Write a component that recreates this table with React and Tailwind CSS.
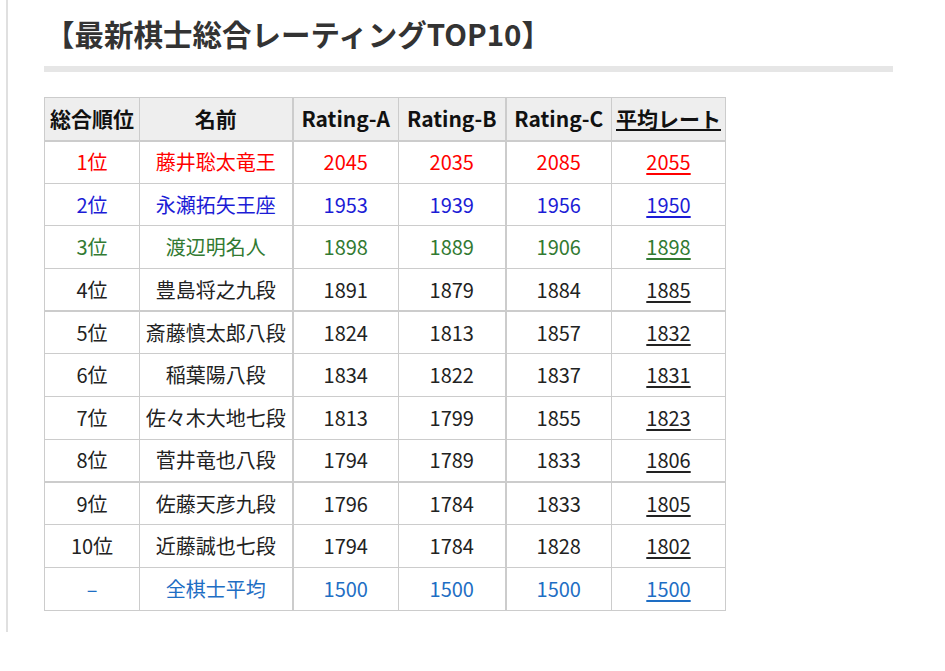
import React from 'react';

const rows = [
  { rank: '1位', name: '藤井聡太竜王', a: 2045, b: 2035, c: 2085, avg: 2055, color: 'text-[#ff0000]' },
  { rank: '2位', name: '永瀬拓矢王座', a: 1953, b: 1939, c: 1956, avg: 1950, color: 'text-[#1c1cd6]' },
  { rank: '3位', name: '渡辺明名人', a: 1898, b: 1889, c: 1906, avg: 1898, color: 'text-[#327a32]' },
  { rank: '4位', name: '豊島将之九段', a: 1891, b: 1879, c: 1884, avg: 1885, color: 'text-[#222]' },
  { rank: '5位', name: '斎藤慎太郎八段', a: 1824, b: 1813, c: 1857, avg: 1832, color: 'text-[#222]', thick: true },
  { rank: '6位', name: '稲葉陽八段', a: 1834, b: 1822, c: 1837, avg: 1831, color: 'text-[#222]' },
  { rank: '7位', name: '佐々木大地七段', a: 1813, b: 1799, c: 1855, avg: 1823, color: 'text-[#222]' },
  { rank: '8位', name: '菅井竜也八段', a: 1794, b: 1789, c: 1833, avg: 1806, color: 'text-[#222]' },
  { rank: '9位', name: '佐藤天彦九段', a: 1796, b: 1784, c: 1833, avg: 1805, color: 'text-[#222]', thick: true },
  { rank: '10位', name: '近藤誠也七段', a: 1794, b: 1784, c: 1828, avg: 1802, color: 'text-[#222]' },
  { rank: '–', name: '全棋士平均', a: 1500, b: 1500, c: 1500, avg: 1500, color: 'text-[#1e6ec4]' },
];

export default function App() {
  return (
    <div className="bg-white min-h-[671px] font-['Noto_Sans_CJK_JP',sans-serif]">
      <div className="ml-[6px] w-[888px] border-l-2 border-[#e0e0e0] pl-[36px] pb-[21px]">
        <h1 className="pl-[1px] pt-[10px] h-[46px] text-[29.5px] leading-[46px] font-bold text-[#333]">
          【最新棋士総合レーティングTOP10】
        </h1>
        <div className="mt-[20px] h-[6px] w-[849px] bg-[#e6e6e6]" />
        <table className="mt-[25px] w-[681px] table-fixed border-collapse text-[20px] text-center">
          <colgroup>
            <col className="w-[95px]" />
            <col className="w-[153px]" />
            <col className="w-[106px]" />
            <col className="w-[107px]" />
            <col className="w-[106px]" />
            <col className="w-[114px]" />
          </colgroup>
          <thead>
            <tr className="h-[43px] bg-[#eeeeee] text-[#111] font-bold text-[21px]">
              <th className="border border-[#cccccc] border-b-2">総合順位</th>
              <th className="border border-[#cccccc] border-b-2">名前</th>
              <th className="border border-[#cccccc] border-b-2 border-l-2">Rating-A</th>
              <th className="border border-[#cccccc] border-b-2">Rating-B</th>
              <th className="border border-[#cccccc] border-b-2 border-l-2">Rating-C</th>
              <th className="border border-[#cccccc] border-b-2 underline underline-offset-2">平均レート</th>
            </tr>
          </thead>
          <tbody>
            {rows.map((r) => (
              <tr key={r.rank} className={`h-[42.7px] ${r.color}`}>
                <td className={`border border-[#cccccc] ${r.thick ? 'border-t-2' : ''}`}>{r.rank}</td>
                <td className={`border border-[#cccccc] ${r.thick ? 'border-t-2' : ''}`}>{r.name}</td>
                <td className={`border border-[#cccccc] border-l-2 ${r.thick ? 'border-t-2' : ''}`}>{r.a}</td>
                <td className={`border border-[#cccccc] ${r.thick ? 'border-t-2' : ''}`}>{r.b}</td>
                <td className={`border border-[#cccccc] border-l-2 ${r.thick ? 'border-t-2' : ''}`}>{r.c}</td>
                <td className={`border border-[#cccccc] ${r.thick ? 'border-t-2' : ''}`}>
                  <span className="underline underline-offset-[3px]">{r.avg}</span>
                </td>
              </tr>
            ))}
          </tbody>
        </table>
      </div>
    </div>
  );
}
